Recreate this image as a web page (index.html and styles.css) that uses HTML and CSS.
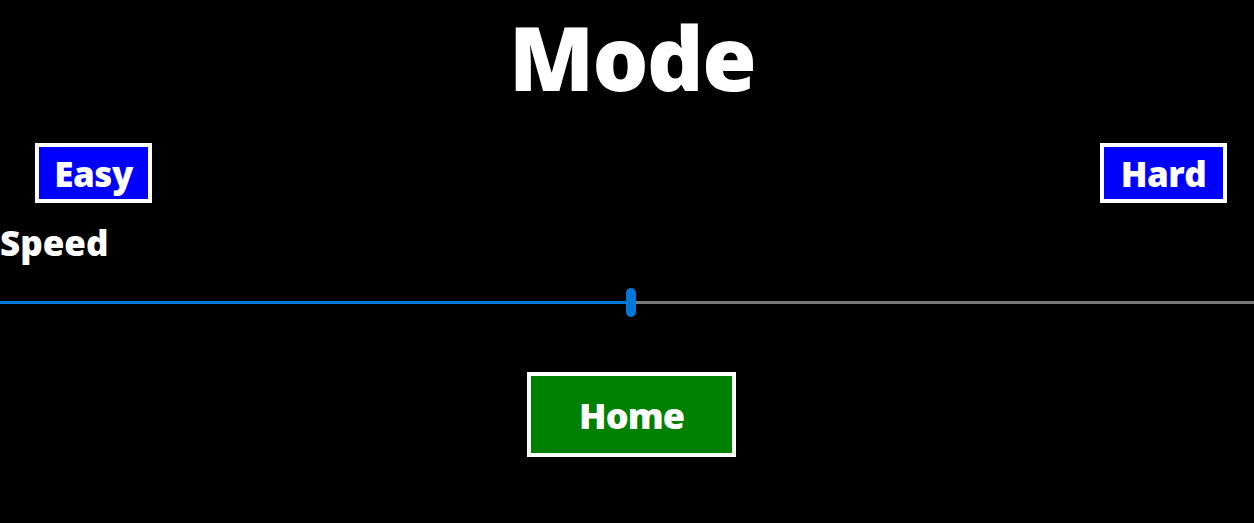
FILE: index.html
```html
<!DOCTYPE html>
<html>
<head>
<meta charset="utf-8">
<link rel="stylesheet" href="styles.css">
</head>
<body>
<div class="page">
  <h1 class="title">Mode</h1>
  <div class="modes">
    <div class="mode-btn easy">Easy</div>
    <div class="mode-btn hard">Hard</div>
  </div>
  <div class="label">Speed</div>
  <div class="slider">
    <div class="track-fill"></div>
    <div class="thumb"></div>
    <div class="track-rest"></div>
  </div>
  <div class="home-row">
    <div class="home-btn">Home</div>
  </div>
</div>
</body>
</html>
```
FILE: styles.css
```css
html, body {
  margin: 0;
  padding: 0;
  background: #000;
}
.page {
  width: 1254px;
  height: 523px;
  font-family: "Open Sans", "Noto Sans", sans-serif;
  font-weight: 800;
  color: #fff;
  display: flex;
  flex-direction: column;
}
.title {
  margin: 0;
  padding: 2px 0 0 10px;
  height: 141px;
  box-sizing: content-box;
  font-size: 88px;
  line-height: 110px;
  text-align: center;
  font-weight: 800;
  letter-spacing: -1.5px;
}
.modes {
  display: flex;
  justify-content: space-between;
  padding: 0 27px 0 35px;
  height: 60px;
}
.mode-btn {
  box-sizing: border-box;
  height: 60px;
  border: 4px solid #fff;
  background: #0000ff;
  font-size: 35px;
  line-height: 54px;
  text-align: center;
  letter-spacing: -0.5px;
}
.easy { width: 117px; }
.hard { width: 127px; }
.label {
  font-size: 35px;
  line-height: 40px;
  margin-top: 20px;
  letter-spacing: 0px;
}
.slider {
  margin-top: 25px;
  height: 29px;
  display: flex;
  align-items: center;
}
.track-fill {
  width: 626px;
  height: 3px;
  background: #0078d7;
}
.thumb {
  width: 10px;
  height: 29px;
  border-radius: 5px;
  background: #0078d7;
}
.track-rest {
  flex: 1;
  height: 3px;
  background: #7a7a7a;
}
.home-row {
  margin-top: 55px;
  display: flex;
  justify-content: center;
  padding-left: 9px;
}
.home-btn {
  box-sizing: border-box;
  width: 209px;
  height: 85px;
  border: 4px solid #fff;
  background: #008000;
  font-size: 36px;
  line-height: 80px;
  text-align: center;
  letter-spacing: -1px;
}
```
